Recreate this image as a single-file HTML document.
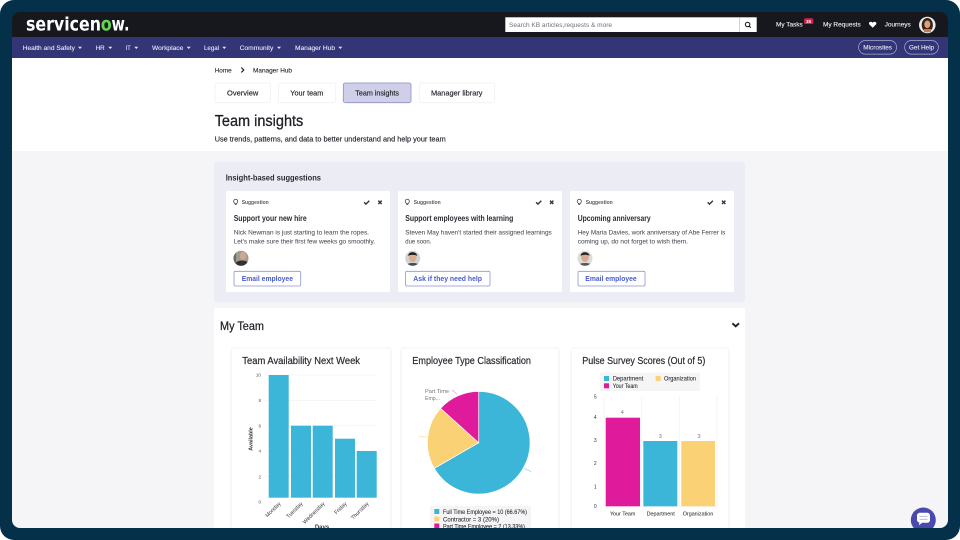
<!DOCTYPE html>
<html><head><meta charset="utf-8"><title>Team insights</title>
<style>
html,body{margin:0;padding:0;width:960px;height:540px;overflow:hidden;background:#fff}
svg{display:block;filter:blur(.35px)}
text{font-family:"Liberation Sans",sans-serif}
.n{font-size:6.8px;fill:#e4e5f6;stroke:#e4e5f6;stroke-width:.12}
.h{font-size:6.8px;fill:#f0f0f3;stroke:#f0f0f3;stroke-width:.12}
.t{font-size:7.5px;fill:#22222a;stroke:#22222a;stroke-width:.14}
.cb{font-size:8px;font-weight:bold;fill:#2a2a33}
.b{font-size:6.700px;fill:#4f4f59;stroke:#4f4f59;stroke-width:.06}
.s{font-size:5.200px;font-weight:bold;fill:#5a5a64}
.e{font-size:7.300px;font-weight:bold;fill:#4a5bd0}
.ct{font-size:9.800px;fill:#2a2a32;stroke:#2a2a32;stroke-width:.2}
.a{font-size:4.600px;fill:#555}
.l{font-size:6.200px;fill:#2c2c34;stroke:#2c2c34;stroke-width:.08}
.p{font-size:5.400px;fill:#33333b;stroke:#33333b;stroke-width:.06}
</style></head><body>
<svg width="960" height="540" viewBox="0 0 960 540" xmlns="http://www.w3.org/2000/svg">
<defs>
<clipPath id="a1"><circle cx="241" cy="258.3" r="7.5"/></clipPath>
<clipPath id="a2"><circle cx="412.7" cy="258.3" r="7.5"/></clipPath>
<clipPath id="a3"><circle cx="585" cy="258.3" r="7.5"/></clipPath>
<clipPath id="a4"><circle cx="927.3" cy="25" r="7.4"/></clipPath>
<g id="bulb"><path d="M0-3.1a2.1 2.1 0 0 1 1.3 3.7c-.4.3-.5.7-.5 1h-1.6c0-.3-.1-.7-.5-1A2.1 2.1 0 0 1 0-3.1z" fill="none" stroke="#33333b" stroke-width=".7"/><path d="M-.8 2.3h1.6" stroke="#33333b" stroke-width=".7"/></g>
<path id="chk" d="M-2.6 0l1.8 1.800 3.400-3.300" fill="none" stroke="#33333b" stroke-width="1.400"/>
<path id="cls" d="M-1.700-1.700l3.400 3.400M1.700-1.700l-3.400 3.400" fill="none" stroke="#33333b" stroke-width="1.400"/>
<path id="car" d="M-2-.9h4l-2 2.200z" fill="#e4e5f6"/>
</defs>

<!-- page -->
<rect x="12" y="12" width="936" height="516" fill="#fff"/>
<rect x="12" y="151" width="936" height="377" fill="#f5f5f7"/>
<rect x="12" y="12" width="936" height="25" fill="#17181d"/>
<rect x="12" y="37" width="936" height="21" fill="#343577"/>

<!-- logo -->
<text x="26" y="30.700" font-size="19" font-weight="bold" style="font-family:'DejaVu Sans',sans-serif" fill="#fff" textLength="75" lengthAdjust="spacingAndGlyphs">servicen</text>
<text x="100.800" y="30.700" font-size="19" font-weight="bold" style="font-family:'DejaVu Sans',sans-serif" fill="#62d84e" textLength="11" lengthAdjust="spacingAndGlyphs">o</text>
<text x="111.500" y="30.700" font-size="19" font-weight="bold" style="font-family:'DejaVu Sans',sans-serif" fill="#fff" textLength="18" lengthAdjust="spacingAndGlyphs">w.</text>

<!-- search -->
<rect x="505.300" y="17.300" width="251.400" height="14.700" fill="#fff"/>
<rect x="739" y="17.300" width=".8" height="14.700" fill="#c9c9cf"/>
<text x="509" y="27" font-size="6.600" fill="#6f6f77" textLength="103" lengthAdjust="spacingAndGlyphs">Search KB articles,requests &amp; more</text>
<circle cx="747.600" cy="24.500" r="2.200" fill="none" stroke="#222" stroke-width="1.100"/><path d="M749.100 26l1.700 1.700" stroke="#222" stroke-width="1.100"/>

<text class="h" x="776" y="26.400" textLength="26.700" lengthAdjust="spacingAndGlyphs">My Tasks</text>
<rect x="804" y="18.300" width="9.300" height="5.700" rx="1.800" fill="#d8204a"/>
<text x="806.200" y="22.800" font-size="4.200" font-weight="bold" fill="#fff" textLength="4.800" lengthAdjust="spacingAndGlyphs">35</text>
<text class="h" x="823" y="26.400" textLength="37.700" lengthAdjust="spacingAndGlyphs">My Requests</text>
<path d="M872.700 27.800l-3.300-3.300c-1.700-2 2-4.200 3.300-1.600 1.300-2.600 5-.4 3.300 1.600z" fill="#fff"/>
<text class="h" x="884.700" y="26.400" textLength="26" lengthAdjust="spacingAndGlyphs">Journeys</text>
<circle cx="927.300" cy="25" r="8.300" fill="#e8e8e8"/>
<g clip-path="url(#a4)"><rect x="918" y="16" width="20" height="18" fill="#eee"/><ellipse cx="927.300" cy="25" rx="5.600" ry="7" fill="#3a2418"/><ellipse cx="927.300" cy="24.300" rx="3" ry="3.800" fill="#d9a27e"/><rect x="924" y="29" width="7" height="5" fill="#c9764a"/></g>

<!-- nav -->
<text class="n" x="22.700" y="50" textLength="52.300" lengthAdjust="spacingAndGlyphs">Health and Safety</text><use href="#car" x="80" y="47.700"/>
<text class="n" x="95.700" y="50" textLength="9" lengthAdjust="spacingAndGlyphs">HR</text><use href="#car" x="110.300" y="47.700"/>
<text class="n" x="125.700" y="50" textLength="5" lengthAdjust="spacingAndGlyphs">IT</text><use href="#car" x="136.300" y="47.700"/>
<text class="n" x="152" y="50" textLength="31.300" lengthAdjust="spacingAndGlyphs">Workplace</text><use href="#car" x="188.700" y="47.700"/>
<text class="n" x="204" y="50" textLength="15" lengthAdjust="spacingAndGlyphs">Legal</text><use href="#car" x="224.300" y="47.700"/>
<text class="n" x="239.700" y="50" textLength="33.600" lengthAdjust="spacingAndGlyphs">Community</text><use href="#car" x="279" y="47.700"/>
<text class="n" x="295" y="50" textLength="40" lengthAdjust="spacingAndGlyphs">Manager Hub</text><use href="#car" x="340.300" y="47.700"/>

<rect x="858.600" y="40.500" width="38" height="13.600" rx="6.800" fill="none" stroke="#a9abd8" stroke-width=".7"/>
<text class="n" x="863.300" y="49.300" textLength="28.700" lengthAdjust="spacingAndGlyphs">Microsites</text>
<rect x="904.600" y="40.500" width="33.800" height="13.600" rx="6.800" fill="none" stroke="#a9abd8" stroke-width=".7"/>
<text class="n" x="909" y="49.300" textLength="25" lengthAdjust="spacingAndGlyphs">Get Help</text>

<!-- breadcrumb -->
<text x="214.700" y="72.300" font-size="6.600" fill="#22222a" stroke="#22222a" stroke-width=".1" textLength="17" lengthAdjust="spacingAndGlyphs">Home</text>
<path d="M241.300 67.600l2.500 2.400-2.500 2.400" fill="none" stroke="#22222a" stroke-width="1.200"/>
<text x="253" y="72.300" font-size="6.600" fill="#22222a" stroke="#22222a" stroke-width=".1" textLength="39" lengthAdjust="spacingAndGlyphs">Manager Hub</text>

<!-- tabs -->
<rect x="215" y="83" width="55.300" height="19.700" rx="2" fill="#fff" stroke="#f0f0f3" stroke-width=".8"/>
<text class="t" x="227" y="95.500" textLength="31.300" lengthAdjust="spacingAndGlyphs">Overview</text>
<rect x="278.300" y="83" width="57.400" height="19.700" rx="2" fill="#fff" stroke="#f0f0f3" stroke-width=".8"/>
<text class="t" x="290.300" y="95.500" textLength="33" lengthAdjust="spacingAndGlyphs">Your team</text>
<rect x="343.300" y="83" width="67.700" height="19.700" rx="2" fill="#cfcfe9" stroke="#8f8fc4" stroke-width=".8"/>
<text class="t" x="355.300" y="95.500" textLength="43.700" lengthAdjust="spacingAndGlyphs">Team insights</text>
<rect x="419.300" y="83" width="75.400" height="19.700" rx="2" fill="#fff" stroke="#f0f0f3" stroke-width=".8"/>
<text class="t" x="431" y="95.500" textLength="51.500" lengthAdjust="spacingAndGlyphs">Manager library</text>

<text x="214.700" y="126" font-size="15.500" fill="#1e1e26" stroke="#1e1e26" stroke-width=".3" textLength="88.600" lengthAdjust="spacingAndGlyphs">Team insights</text>
<text class="t" x="214.700" y="141.500" textLength="231" lengthAdjust="spacingAndGlyphs">Use trends, patterns, and data to better understand and help your team</text>

<!-- suggestions panel -->
<rect x="214" y="162" width="531" height="140" rx="3" fill="#ebecf4"/>
<text x="225.700" y="180.500" font-size="8" font-weight="bold" fill="#2a2a33" textLength="95.300" lengthAdjust="spacingAndGlyphs">Insight-based suggestions</text>

<rect x="226" y="191" width="164" height="101" rx="1.500" fill="#fff"/>
<rect x="398" y="191" width="164" height="101" rx="1.500" fill="#fff"/>
<rect x="570" y="191" width="164" height="101" rx="1.500" fill="#fff"/>

<use href="#bulb" x="235.700" y="202.300"/><text class="s" x="241.700" y="204" textLength="27" lengthAdjust="spacingAndGlyphs">Suggestion</text><use href="#chk" x="366.700" y="202.300"/><use href="#cls" x="380" y="202.300"/>
<use href="#bulb" x="407.300" y="202.300"/><text class="s" x="413.700" y="204" textLength="27" lengthAdjust="spacingAndGlyphs">Suggestion</text><use href="#chk" x="538.700" y="202.300"/><use href="#cls" x="551.700" y="202.300"/>
<use href="#bulb" x="579.300" y="202.300"/><text class="s" x="585.700" y="204" textLength="27" lengthAdjust="spacingAndGlyphs">Suggestion</text><use href="#chk" x="710.300" y="202.300"/><use href="#cls" x="723.700" y="202.300"/>

<text class="cb" x="233.700" y="221" textLength="73" lengthAdjust="spacingAndGlyphs">Support your new hire</text>
<text class="cb" x="405.300" y="221" textLength="108" lengthAdjust="spacingAndGlyphs">Support employees with learning</text>
<text class="cb" x="577.700" y="221" textLength="73" lengthAdjust="spacingAndGlyphs">Upcoming anniversary</text>

<text class="b" x="233.700" y="234.300" textLength="135.300" lengthAdjust="spacingAndGlyphs">Nick Newman is just starting to learn the ropes.</text>
<text class="b" x="233.700" y="243.500" textLength="141.300" lengthAdjust="spacingAndGlyphs">Let's make sure their first few weeks go smoothly.</text>
<text class="b" x="405.300" y="234.300" textLength="146.400" lengthAdjust="spacingAndGlyphs">Steven May haven't started their assigned learnings</text>
<text class="b" x="405.300" y="243.500" textLength="26" lengthAdjust="spacingAndGlyphs">due soon.</text>
<text class="b" x="577.700" y="234.300" textLength="147.600" lengthAdjust="spacingAndGlyphs">Hey Maria Davies, work anniversary of Abe Ferrer is</text>
<text class="b" x="577.700" y="243.500" textLength="110.300" lengthAdjust="spacingAndGlyphs">coming up, do not forget to wish them.</text>

<!-- avatars -->
<g clip-path="url(#a1)"><rect x="233" y="250" width="16" height="17" fill="#a09a95"/><ellipse cx="243" cy="256" rx="3.200" ry="4" fill="#d0a68c"/><path d="M234 267l2.500-5c3-2 8-2 11 0l2 5z" fill="#33302e"/><rect x="233" y="250" width="3" height="17" fill="#6d6863"/></g>
<g clip-path="url(#a2)"><rect x="405" y="250" width="16" height="17" fill="#d0d3d6"/><ellipse cx="412.700" cy="257.500" rx="3.800" ry="4.500" fill="#dcae8e"/><path d="M408.300 256c-.5-5 8.800-5 8.800 0-2-1.600-6.600-1.600-8.800 0z" fill="#1e1a18"/><path d="M405 267c1-3 4-4 7.700-4s6.700 1 7.700 4z" fill="#3f4c58"/></g>
<g clip-path="url(#a3)"><rect x="577" y="250" width="16" height="17" fill="#dcdcda"/><ellipse cx="585" cy="257.500" rx="3.800" ry="4.500" fill="#d8a890"/><path d="M580.700 256c-.5-5 8.800-5 8.800 0-2-1.600-6.600-1.600-8.800 0z" fill="#2a2320"/><path d="M577 267c1-3 4-4 8-4s7 1 8 4z" fill="#55555b"/></g>

<!-- buttons -->
<rect x="234" y="271.300" width="66.700" height="14.700" rx="1.500" fill="#fff" stroke="#8f94d2" stroke-width=".8"/>
<text class="e" x="241.700" y="281.200" textLength="51.300" lengthAdjust="spacingAndGlyphs">Email employee</text>
<rect x="405.600" y="271.300" width="84.400" height="14.700" rx="1.500" fill="#fff" stroke="#8f94d2" stroke-width=".8"/>
<text class="e" x="413.300" y="281.200" textLength="68.700" lengthAdjust="spacingAndGlyphs">Ask if they need help</text>
<rect x="578" y="271.300" width="67" height="14.700" rx="1.500" fill="#fff" stroke="#8f94d2" stroke-width=".8"/>
<text class="e" x="585.300" y="281.200" textLength="51.400" lengthAdjust="spacingAndGlyphs">Email employee</text>

<!-- my team panel -->
<rect x="214" y="308" width="531" height="225" rx="2" fill="#fff"/>
<text x="220" y="330" font-size="12" fill="#1e1e26" stroke="#1e1e26" stroke-width=".22" textLength="44" lengthAdjust="spacingAndGlyphs">My Team</text>
<path d="M732.400 323.300l3.300 3 3.300-3" fill="none" stroke="#1e1e26" stroke-width="1.900"/>

<rect x="231" y="348" width="160" height="190" rx="3" fill="#fff" stroke="#efeff2" stroke-width=".8"/>
<rect x="401" y="348" width="158" height="190" rx="3" fill="#fff" stroke="#efeff2" stroke-width=".8"/>
<rect x="571" y="348" width="158" height="190" rx="3" fill="#fff" stroke="#efeff2" stroke-width=".8"/>

<text class="ct" x="242.300" y="364" textLength="117.700" lengthAdjust="spacingAndGlyphs">Team Availability Next Week</text>
<text class="ct" x="412.300" y="364" textLength="118.700" lengthAdjust="spacingAndGlyphs">Employee Type Classification</text>
<text class="ct" x="582.300" y="364" textLength="123" lengthAdjust="spacingAndGlyphs">Pulse Survey Scores (Out of 5)</text>

<!-- bar chart -->
<g stroke="#f0f0f2" stroke-width=".6"><path d="M265 375h112M265 400.300h112M265 425.700h112M265 451h112M265 476.600h112"/></g>
<g fill="#3cb6d8">
<rect x="268.700" y="375" width="20" height="122.700"/>
<rect x="291" y="425.700" width="20" height="72"/>
<rect x="312.700" y="425.700" width="20" height="72"/>
<rect x="335" y="438.700" width="20" height="59"/>
<rect x="356.700" y="451" width="20" height="46.700"/>
</g>
<text class="a" x="261" y="376.700" text-anchor="end">10</text>
<text class="a" x="261" y="402" text-anchor="end">8</text>
<text class="a" x="261" y="427.400" text-anchor="end">6</text>
<text class="a" x="261" y="452.700" text-anchor="end">4</text>
<text class="a" x="261" y="478.300" text-anchor="end">2</text>
<text class="a" x="261" y="503.700" text-anchor="end">0</text>
<text x="0" y="0" font-size="5.400" font-weight="bold" fill="#33333b" text-anchor="middle" transform="translate(252.500 439) rotate(-90)">Available</text>
<g font-size="5.400" fill="#33333b" text-anchor="end">
<text transform="translate(281 504) rotate(-45)">Monday</text>
<text transform="translate(303 504) rotate(-45)">Tuesday</text>
<text transform="translate(325 504) rotate(-45)">Wednesday</text>
<text transform="translate(347 504) rotate(-45)">Friday</text>
<text transform="translate(369 504) rotate(-45)">Thursday</text>
</g>
<text x="322" y="529" font-size="6" font-weight="bold" fill="#33333b" text-anchor="middle">Days</text>

<!-- pie -->
<path d="M478.700 442.700V391.400A51.300 51.300 0 1 1 434.300 468.350z" fill="#3cb6d8" stroke="#fff" stroke-width=".7"/>
<path d="M478.700 442.700L434.300 468.350A51.300 51.300 0 0 1 440.600 408.400z" fill="#fbd176" stroke="#fff" stroke-width=".7"/>
<path d="M478.700 442.700L440.600 408.400A51.300 51.300 0 0 1 478.700 391.400z" fill="#df1b9c" stroke="#fff" stroke-width=".7"/>
<path d="M452.300 390l4.700 4.300" stroke="#e884c8" stroke-width=".6"/>
<path d="M419 436.700l8.300.3" stroke="#fbd176" stroke-width=".6"/>
<path d="M524.300 468.300l6.700 3.400" stroke="#8fd0e6" stroke-width=".6"/>
<text x="425" y="393" font-size="5.600" fill="#77777f" textLength="24" lengthAdjust="spacingAndGlyphs">Part Time</text>
<text x="425" y="400" font-size="5.600" fill="#77777f" textLength="15" lengthAdjust="spacingAndGlyphs">Emp...</text>
<rect x="430" y="506" width="101" height="24" fill="#f5f5f6"/>
<rect x="434.300" y="509" width="5" height="5" fill="#3cb6d8"/>
<rect x="434.300" y="516.500" width="5" height="5" fill="#fbd176"/>
<rect x="434.300" y="523.500" width="5" height="5" fill="#df1b9c"/>
<text class="l" x="443" y="514" textLength="84" lengthAdjust="spacingAndGlyphs">Full Time Employee = 10 (66.67%)</text>
<text class="l" x="443" y="521.300" textLength="56" lengthAdjust="spacingAndGlyphs">Contractor = 3 (20%)</text>
<text class="l" x="443" y="528.500" textLength="82" lengthAdjust="spacingAndGlyphs">Part Time Employee = 2 (13.33%)</text>

<!-- pulse chart -->
<rect x="600" y="372.700" width="100" height="18.300" fill="#f5f5f6"/>
<rect x="604" y="376" width="5" height="5" fill="#3cb6d8"/>
<rect x="655.700" y="376" width="5" height="5" fill="#fbd176"/>
<rect x="604" y="383.300" width="5" height="5" fill="#df1b9c"/>
<text class="l" x="612.700" y="380.700" textLength="30.500" lengthAdjust="spacingAndGlyphs">Department</text>
<text class="l" x="664" y="380.700" textLength="32" lengthAdjust="spacingAndGlyphs">Organization</text>
<text class="l" x="612.700" y="388" textLength="25" lengthAdjust="spacingAndGlyphs">Your Team</text>
<g stroke="#f0f0f2" stroke-width=".6"><path d="M604 396v110.300M641.700 396v110.300M679.300 396v110.300M717 396v110.300M604 506.300h113"/></g>
<rect x="605.700" y="417.700" width="34.300" height="88.600" fill="#df1b9c"/>
<rect x="643.300" y="441" width="34" height="65.300" fill="#3cb6d8"/>
<rect x="681.300" y="441" width="33.700" height="65.300" fill="#fbd176"/>
<g font-size="5" fill="#33333b" text-anchor="middle">
<text x="595.300" y="398.500">5</text><text x="595.300" y="419">4</text><text x="595.300" y="441.800">3</text><text x="595.300" y="464.800">2</text><text x="595.300" y="488.500">1</text><text x="595.300" y="508">0</text>
</g>
<g font-size="5.800" fill="#77777f" text-anchor="middle"><text x="622.300" y="414">4</text><text x="660.300" y="438">3</text><text x="699" y="438">3</text></g>
<text class="p" x="622.700" y="515.300" text-anchor="middle">Your Team</text>
<text class="p" x="660.700" y="515.300" text-anchor="middle">Department</text>
<text class="p" x="698" y="515.300" text-anchor="middle">Organization</text>

<!-- chat -->
<circle cx="923.300" cy="520" r="12.500" fill="#4a4aad"/>
<path d="M917 515.500c0-1.500 1.500-2.700 3-2.700h7c1.700 0 3 1.200 3 2.700v4.500c0 1.600-1.300 2.800-3 2.800h-4.800l-3.400 2.400.6-2.600c-1.400-.3-2.400-1.400-2.400-2.600z" fill="#fff"/>
<path d="M919.500 516.300h8M919.500 519.300h8" stroke="#a9b4dc" stroke-width=".8"/>

<!-- frame -->
<path fill-rule="evenodd" d="M14 0H946A14 14 0 0 1 960 14V526A14 14 0 0 1 946 540H14A14 14 0 0 1 0 526V14A14 14 0 0 1 14 0ZM20 12A8 8 0 0 0 12 20V520A8 8 0 0 0 20 528H940A8 8 0 0 0 948 520V20A8 8 0 0 0 940 12Z" fill="#04304a"/>
</svg>
</body></html>
